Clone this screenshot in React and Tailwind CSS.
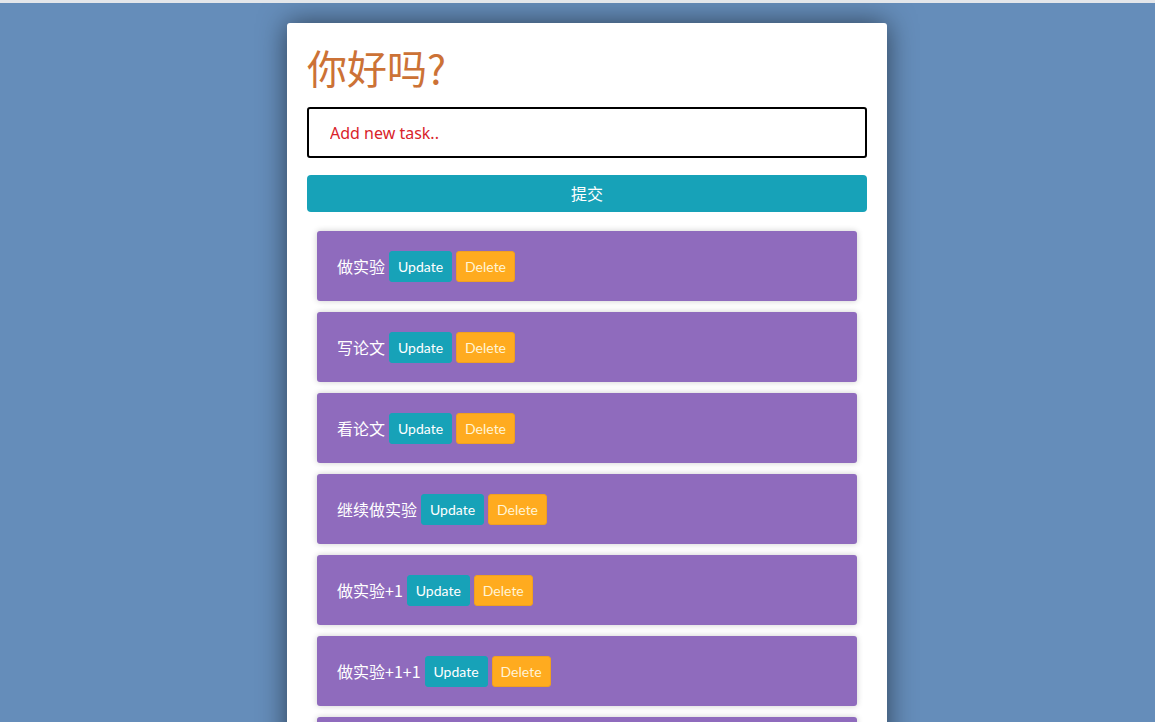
import React from "react";

const tasks = ["做实验", "写论文", "看论文", "继续做实验", "做实验+1", "做实验+1+1", "做实验+1+1+1"];

export default function App() {
  return (
    <div
      className="h-[722px] overflow-hidden bg-[#658dba] border-t-[3px] border-[#e3e6ea] pl-[19px]"
      style={{ fontFamily: '"Noto Sans", "Noto Sans CJK SC", sans-serif' }}
    >
      <div className="mx-auto mt-[20px] w-[600px] bg-white rounded-[3px] px-[20px] pt-[20px] pb-[40px] shadow-[0_0_28px_rgba(0,0,0,0.55)]">
        <h1
          className="text-[40px] leading-[48px] text-[#cc7236] mb-[16px]"
          style={{ fontFamily: '"Noto Sans CJK SC", sans-serif' }}
        >
          你好吗?
        </h1>
        <input
          type="text"
          placeholder="Add new task.."
          className="block w-full h-[51px] border-2 border-black rounded-[3px] pl-[21px] text-[16px] outline-none placeholder:text-[#d9232a]"
        />
        <button className="mt-[17px] w-full h-[37px] bg-[#17a2b8] text-white text-[16px] rounded-[4px]">
          提交
        </button>
        <div className="mt-[19px] px-[10px] flex flex-col gap-[11px]">
          {tasks.map((t) => (
            <div
              key={t}
              className="h-[70px] bg-[#8f6bbd] rounded-[3px] pl-[20px] flex items-center shadow-[0_0_6px_rgba(0,0,0,0.2)]"
            >
              <span
                className="text-white text-[16px] mr-[4px]"
                style={{ fontFamily: '"Noto Sans CJK SC", sans-serif' }}
              >
                {t}
              </span>
              <button
                className="h-[31px] px-[8px] border border-[#17a2b8] bg-[#17a2b8] text-white text-[14px] rounded-[3px] mr-[4px]"
                style={{ fontFamily: "Lato, sans-serif" }}
              >
                Update
              </button>
              <button
                className="h-[31px] px-[8px] border border-[#f0a020] bg-[#ffab1f] text-[#fff4d6] text-[14px] rounded-[3px]"
                style={{ fontFamily: "Lato, sans-serif" }}
              >
                Delete
              </button>
            </div>
          ))}
        </div>
      </div>
    </div>
  );
}
